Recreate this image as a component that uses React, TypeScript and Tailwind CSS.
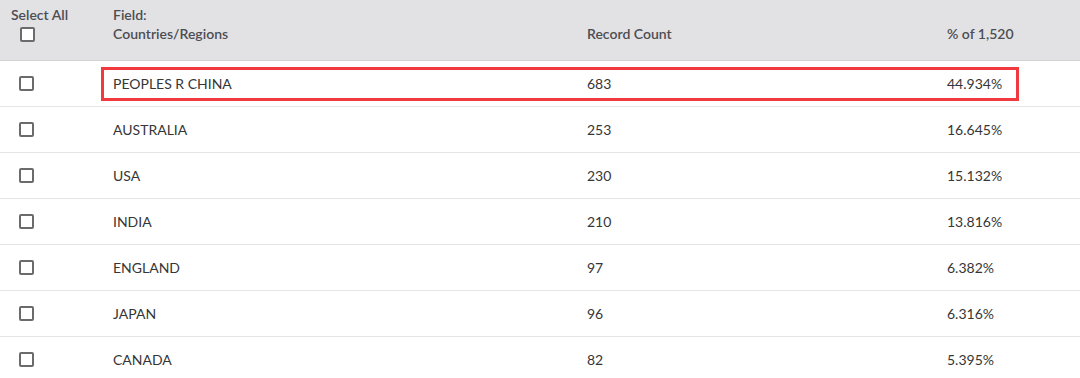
import React from 'react';

const rows = [
  { name: 'PEOPLES R CHINA', count: '683', pct: '44.934%', hit: true },
  { name: 'AUSTRALIA', count: '253', pct: '16.645%' },
  { name: 'USA', count: '230', pct: '15.132%' },
  { name: 'INDIA', count: '210', pct: '13.816%' },
  { name: 'ENGLAND', count: '97', pct: '6.382%' },
  { name: 'JAPAN', count: '96', pct: '6.316%' },
  { name: 'CANADA', count: '82', pct: '5.395%' },
];

const Box = () => (
  <span className="block w-[15px] h-[15px] border-2 border-[#6b6b6b] rounded-[2px] bg-white" />
);

const App = () => {
  return (
    <div className="w-[1080px] h-[378px] overflow-hidden bg-white text-[14px] text-[#363636] font-['Lato','Noto_Sans',sans-serif]">
      <div className="flex h-[61px] bg-[#e2e2e5] border-b border-[#d3d3d6] font-semibold text-[#4d4d52] leading-[19px]">
        <div className="w-[113px] pl-[11px] pt-[5px]">
          <div>Select All</div>
          <div className="pl-[9px] pt-[3px]"><Box /></div>
        </div>
        <div className="w-[474px] pt-[5px]">
          <div>Field:</div>
          <div>Countries/Regions</div>
        </div>
        <div className="w-[360px] pt-[24px]">Record Count</div>
        <div className="pt-[24px]">% of 1,520</div>
      </div>
      {rows.map((r, i) => (
        <div key={i} className="flex items-center h-[46px] border-b border-[#e4e4e4]">
          <div className="w-[101px] pl-[19px]"><Box /></div>
          <div
            className={
              r.hit
                ? 'flex items-center w-[918px] h-[34px] border-[3px] border-[#f03a40]'
                : 'flex items-center w-[918px] h-[34px] border-[3px] border-transparent'
            }
          >
            <div className="w-[483px] pl-[9px]">{r.name}</div>
            <div className="w-[360px]">{r.count}</div>
            <div>{r.pct}</div>
          </div>
        </div>
      ))}
    </div>
  );
};

export default App;
